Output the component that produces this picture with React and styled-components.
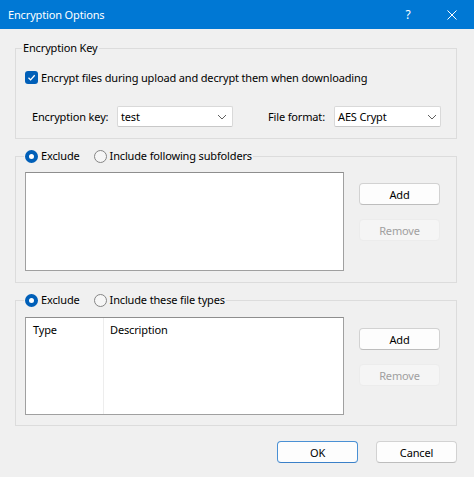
import React, { useState } from "react";
import styled, { createGlobalStyle } from "styled-components";

const GlobalStyle = createGlobalStyle`
  html, body {
    margin: 0;
    padding: 0;
    background: #f0f0f0;
  }
  body {
    font-family: "Segoe UI", "Noto Sans", sans-serif;
    font-size: 11px;
    letter-spacing: -0.15px;
    color: #000;
  }
`;

const Window = styled.div`
  width: 474px;
  height: 477px;
  background: #f0f0f0;
  display: flex;
  flex-direction: column;
  overflow: hidden;
  white-space: nowrap;
`;

const TitleBar = styled.div`
  height: 29px;
  flex: none;
  background: #0078d4;
  color: #fff;
  display: flex;
  align-items: center;
  padding-left: 8px;
`;

const Title = styled.span`
  flex: 1;
  line-height: 16px;
`;

const TitleButton = styled.div`
  width: 44px;
  height: 29px;
  display: flex;
  align-items: center;
  justify-content: center;
  font-size: 12px;
`;

const Body = styled.div`
  padding: 11px 17px 0 15px;
  display: flex;
  flex-direction: column;
`;

const Group = styled.fieldset`
  margin: ${({ $first }) => ($first ? "0" : "9px")} 0 0;
  padding: ${({ $pad }) => $pad};
  border: 1px solid #dcdcdc;
  min-width: 0;
`;

const Legend = styled.legend`
  margin-left: ${({ $radio }) => ($radio ? "-1px" : "-3px")};
  padding: 0 1px;
  line-height: 16px;
  height: 16px;
  display: flex;
  align-items: center;
`;

const CheckRow = styled.label`
  display: flex;
  align-items: center;
  height: 16px;
`;

const CheckBox = styled.span`
  width: 13px;
  height: 13px;
  border-radius: 3px;
  background: #005fb8;
  display: flex;
  align-items: center;
  justify-content: center;
  margin-right: 3px;
  flex: none;
`;

const KeyRow = styled.div`
  margin-top: 21px;
  display: grid;
  grid-template-columns: 92px 116px 1fr auto 107px;
  align-items: center;
`;

const FieldLabel = styled.span`
  grid-column: ${({ $col }) => $col};
  padding-left: ${({ $indent }) => $indent || 0}px;
  margin-right: ${({ $gap }) => $gap || 0}px;
`;

const Combo = styled.div`
  grid-column: ${({ $col }) => $col};
  height: 21px;
  box-sizing: border-box;
  background: #fff;
  border: 1px solid #d9d9d9;
  border-bottom-color: #c8c8c8;
  border-radius: 2px;
  display: flex;
  align-items: center;
  padding: 0 ${({ $chev }) => $chev}px 0 3px;
`;

const ComboText = styled.span`
  flex: 1;
`;

const RadioItem = styled.span`
  display: flex;
  align-items: center;
  margin-right: ${({ $gap }) => $gap || 0}px;
`;

const RadioDot = styled.span`
  width: 13px;
  height: 13px;
  box-sizing: border-box;
  border-radius: 50%;
  margin-right: 3px;
  flex: none;
  ${({ $on }) =>
    $on
      ? `background: #fff; border: 4px solid #005fb8;`
      : `background: #f6f6f6; border: 1px solid #858585;`}
`;

const ListRow = styled.div`
  display: grid;
  grid-template-columns: 319px 81px;
  column-gap: 15px;
  align-items: start;
`;

const ListBox = styled.div`
  height: ${({ $h }) => $h}px;
  box-sizing: border-box;
  background: #fff;
  border: 1px solid #a0a0a0;
  border-top-color: #8e8e8e;
  display: ${({ $cols }) => ($cols ? "grid" : "block")};
  grid-template-columns: 78px 1fr;
`;

const Column = styled.div`
  border-right: ${({ $sep }) => ($sep ? "1px solid #ededed" : "none")};
  padding-left: ${({ $indent }) => $indent}px;
`;

const HeaderCell = styled.div`
  height: 22px;
  display: flex;
  align-items: center;
`;

const ButtonStack = styled.div`
  display: flex;
  flex-direction: column;
  gap: 14px;
  padding-top: 11px;
`;

const Button = styled.button`
  width: 81px;
  height: 22px;
  box-sizing: border-box;
  font: inherit;
  letter-spacing: inherit;
  padding: 0;
  border-radius: 4px;
  background: ${({ disabled }) => (disabled ? "#f5f5f5" : "#fdfdfd")};
  color: ${({ disabled }) => (disabled ? "#a0a0a0" : "#000")};
  border: 1px solid
    ${({ disabled, $default }) =>
      disabled ? "#ececec" : $default ? "#4a90d4" : "#d2d2d2"};
  border-bottom-color: ${({ disabled, $default }) =>
    disabled ? "#ececec" : $default ? "#3a80c8" : "#bdbdbd"};
`;

const Footer = styled.div`
  margin-top: 15px;
  display: flex;
  justify-content: flex-end;
  gap: 18px;
`;

const Chevron = () => (
  <svg width="10" height="6" viewBox="0 0 10 6">
    <path d="M1 1 L5 5 L9 1" fill="none" stroke="#606060" strokeWidth="1" />
  </svg>
);

const Check = () => (
  <svg width="11" height="11" viewBox="0 0 11 11">
    <path d="M2.5 5.8 L4.6 7.9 L8.7 3.3" fill="none" stroke="#fff" strokeWidth="1.3" />
  </svg>
);

const CloseIcon = () => (
  <svg width="10" height="10" viewBox="0 0 10 10">
    <path d="M0.5 0.5 L9.5 9.5 M9.5 0.5 L0.5 9.5" stroke="#fff" strokeWidth="1" />
  </svg>
);

function RadioLegend({ other }) {
  const [exclude] = useState(true);
  return (
    <Legend $radio>
      <RadioItem $gap={14}>
        <RadioDot $on={exclude} />
        Exclude
      </RadioItem>
      <RadioItem>
        <RadioDot $on={!exclude} />
        {other}
      </RadioItem>
    </Legend>
  );
}

export default function App() {
  return (
    <Window>
      <GlobalStyle />
      <TitleBar>
        <Title>Encryption Options</Title>
        <TitleButton>?</TitleButton>
        <TitleButton>
          <CloseIcon />
        </TitleButton>
      </TitleBar>
      <Body>
        <Group $first $pad="13px 15px 11px 9px">
          <Legend>Encryption Key</Legend>
          <CheckRow>
            <CheckBox>
              <Check />
            </CheckBox>
            Encrypt files during upload and decrypt them when downloading
          </CheckRow>
          <KeyRow>
            <FieldLabel $col="1" $indent={7}>Encryption key:</FieldLabel>
            <Combo $col="2" $chev={5}>
              <ComboText>test</ComboText>
              <Chevron />
            </Combo>
            <FieldLabel $col="4" $gap={9}>File format:</FieldLabel>
            <Combo $col="5" $chev={3}>
              <ComboText>AES Crypt</ComboText>
              <Chevron />
            </Combo>
          </KeyRow>
        </Group>

        <Group $pad="8px 16px 11px 9px">
          <RadioLegend other="Include following subfolders" />
          <ListRow>
            <ListBox $h={99} />
            <ButtonStack>
              <Button>Add</Button>
              <Button disabled>Remove</Button>
            </ButtonStack>
          </ListRow>
        </Group>

        <Group $pad="9px 16px 10px 9px">
          <RadioLegend other="Include these file types" />
          <ListRow>
            <ListBox $h={98} $cols>
              <Column $sep $indent={7}>
                <HeaderCell>Type</HeaderCell>
              </Column>
              <Column $indent={6}>
                <HeaderCell>Description</HeaderCell>
              </Column>
            </ListBox>
            <ButtonStack>
              <Button>Add</Button>
              <Button disabled>Remove</Button>
            </ButtonStack>
          </ListRow>
        </Group>

        <Footer>
          <Button $default>OK</Button>
          <Button>Cancel</Button>
        </Footer>
      </Body>
    </Window>
  );
}
